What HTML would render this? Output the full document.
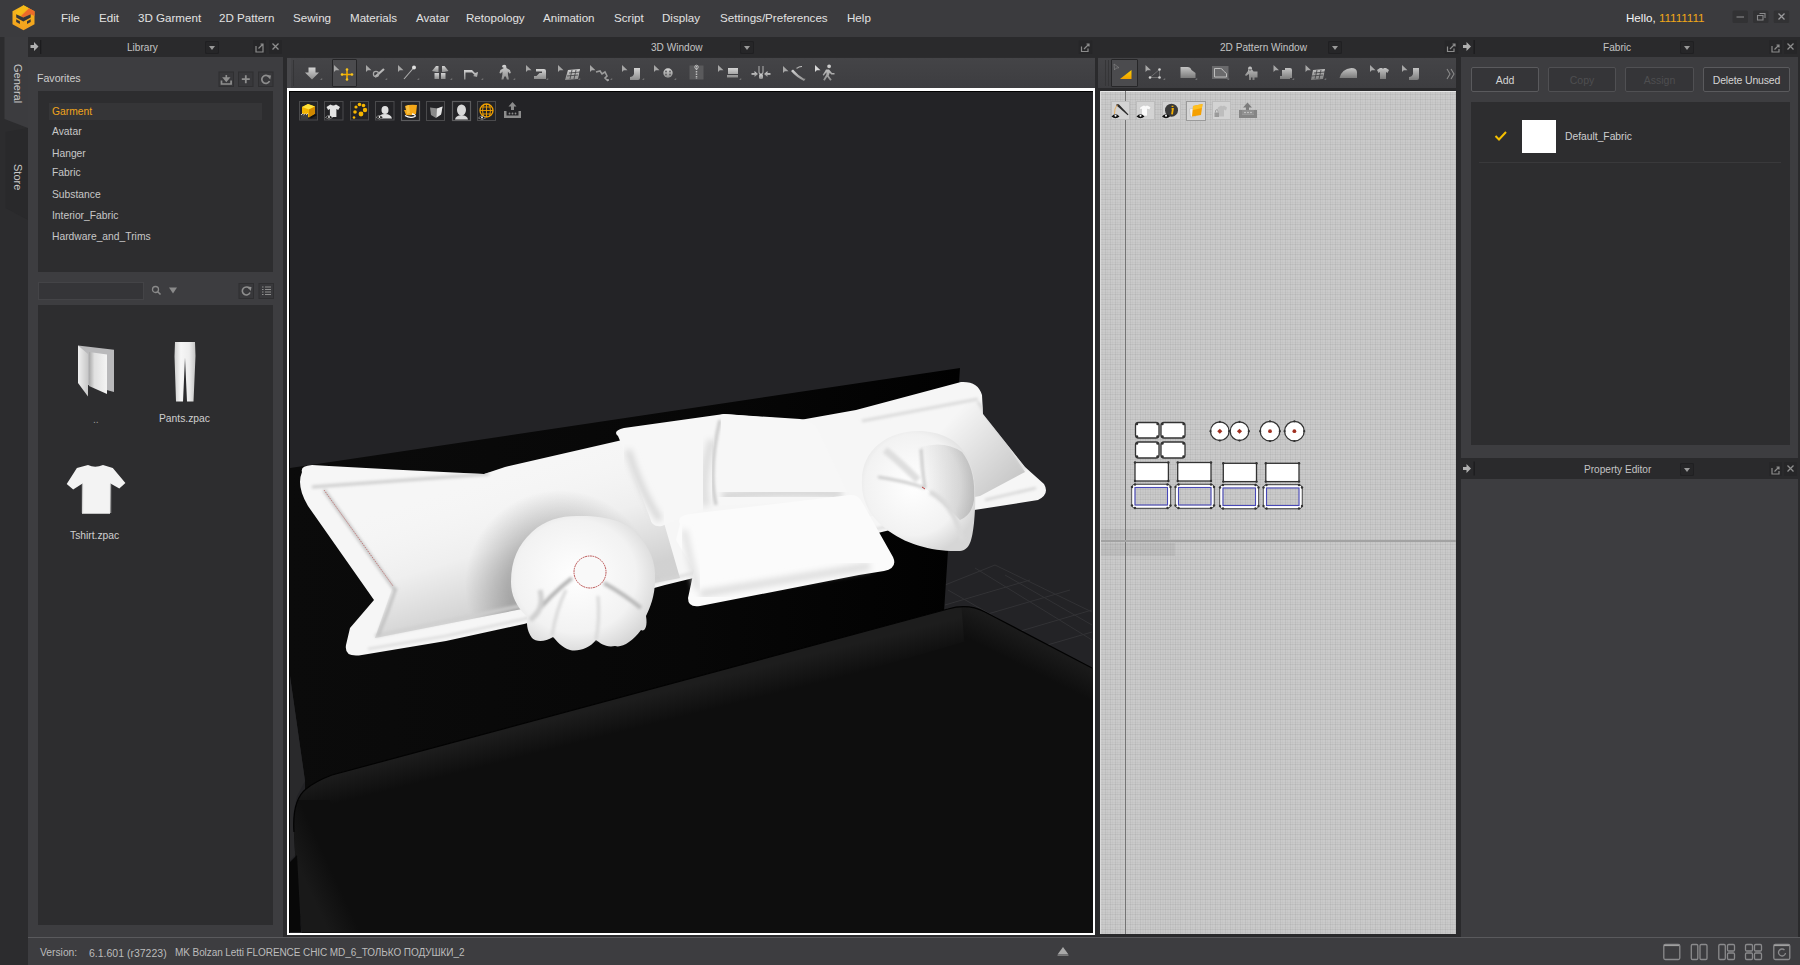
<!DOCTYPE html>
<html><head><meta charset="utf-8">
<style>
*{margin:0;padding:0;box-sizing:border-box}
html,body{width:1800px;height:965px;overflow:hidden;background:#2c2c2e;font-family:"Liberation Sans",sans-serif;color:#c8c8c8}
.a{position:absolute}
#menubar{left:0;top:0;width:1800px;height:37px;background:#3b3b3e}
.mi{position:absolute;top:11px;font-size:11.6px;color:#e2e2e2;white-space:nowrap;line-height:14px}
.hdr{position:absolute;top:37px;height:20px;background:#2a2a2c}
.htitle{position:absolute;top:5px;font-size:10.1px;color:#c4c4c4;white-space:nowrap;line-height:12px}
.dd{position:absolute;top:4px;width:14px;height:13px;background:#262628;border-radius:2px;box-shadow:inset 0 0 0 1px #202022}
.dd:after{content:"";position:absolute;left:4px;top:5px;border-left:3px solid transparent;border-right:3px solid transparent;border-top:4px solid #9a9a9a}
.panel{position:absolute;background:#3d3d40}
.list{position:absolute;background:#2d2d2f}
.li{position:absolute;left:14px;font-size:10.3px;color:#c8c8c8;white-space:nowrap;line-height:12px}
</style></head><body>

<!-- MENU BAR -->
<div id="menubar" class="a">
  <svg class="a" style="left:0;top:0" width="48" height="36" viewBox="0 0 48 36">
    <defs><linearGradient id="lg1" x1="0" y1="0" x2="0" y2="1"><stop offset="0" stop-color="#f5b81c"/><stop offset="1" stop-color="#f2a01e"/></linearGradient></defs>
    <polygon points="23.5,5.2 34.5,11.3 34.5,24.2 23.5,30.3 12.5,24.2 12.5,11.3" fill="url(#lg1)"/>
    <polygon points="23.5,5.2 29,8.2 22,13 18,16.5 16,15.5 16,12" fill="#f6bb18"/>
    <polygon points="29,8.2 34.5,11.3 34.5,16 30.7,14.2 23.3,17.5 21,16" fill="#ec6a2a"/>
    <polygon points="16.2,14.2 23.3,17.5 30.7,14.2 30.7,17.5 23.3,21.6 16.2,17.5" fill="#35363a"/>
    <polygon points="16.2,19.3 19.9,21.2 19.9,23.9 16.2,22" fill="#35363a"/>
    <polygon points="30.7,19.3 27,21.2 27,23.9 30.7,22" fill="#35363a"/>
  </svg>
  <span class="mi" style="left:61px">File</span>
  <span class="mi" style="left:99px">Edit</span>
  <span class="mi" style="left:138px">3D Garment</span>
  <span class="mi" style="left:219px">2D Pattern</span>
  <span class="mi" style="left:293px">Sewing</span>
  <span class="mi" style="left:350px">Materials</span>
  <span class="mi" style="left:416px">Avatar</span>
  <span class="mi" style="left:466px">Retopology</span>
  <span class="mi" style="left:543px">Animation</span>
  <span class="mi" style="left:614px">Script</span>
  <span class="mi" style="left:662px">Display</span>
  <span class="mi" style="left:720px">Settings/Preferences</span>
  <span class="mi" style="left:847px">Help</span>
  <svg class="a" style="left:1730px;top:9px" width="62" height="16" viewBox="1730 9 62 16">
 <g fill="#323234"><rect x="1732.5" y="10.5" width="15.5" height="12.5" rx="1.5"/><rect x="1753" y="10.5" width="15.5" height="12.5" rx="1.5"/><rect x="1773.7" y="10.5" width="15.5" height="12.5" rx="1.5"/></g>
 <path d="M1736.5,17 h7.5" stroke="#7c7c7e" stroke-width="1.3"/>
 <path d="M1757.5,15.5 h5.5 v4.5 h-5.5z M1759.5,13.5 h5.5 v4.5" stroke="#8a8a8c" stroke-width="1.1" fill="none"/>
 <path d="M1778.5,13.5 l6,6 M1784.5,13.5 l-6,6" stroke="#9a9a9c" stroke-width="1.3"/>
</svg>
  <span class="mi" style="left:1626px;color:#f4f4f4">Hello, <span style="color:#f0a818">11111111</span></span>
</div>

<!-- LEFT TAB STRIP -->
<div class="a" style="left:0;top:37px;width:28px;height:928px;background:#2c2c2e"></div>

<!-- HEADERS -->
<div class="hdr" style="left:28px;width:255px"><span class="htitle" style="left:99px">Library</span><div class="dd" style="left:177px"></div></div>
<div class="hdr" style="left:283px;width:815px"><span class="htitle" style="left:368px">3D Window</span><div class="dd" style="left:457px"></div><svg class="a" style="left:795px;top:3px" width="16" height="15"><rect x="0.5" y="0.5" width="14" height="13.5" fill="#262628" rx="1"/><path d="M3.5,6.5 v5 h6.5 v-3 M6,9 l5,-5 M8.5,4 h2.5 v2.5" stroke="#8c8c8c" stroke-width="1.2" fill="none"/></svg></div>
<div class="hdr" style="left:1098px;width:363px"><span class="htitle" style="left:122px">2D Pattern Window</span><div class="dd" style="left:230px"></div><svg class="a" style="left:346px;top:3px" width="16" height="15"><rect x="0.5" y="0.5" width="14" height="13.5" fill="#262628" rx="1"/><path d="M3.5,6.5 v5 h6.5 v-3 M6,9 l5,-5 M8.5,4 h2.5 v2.5" stroke="#8c8c8c" stroke-width="1.2" fill="none"/></svg></div>
<div class="hdr" style="left:1461px;width:339px"><span class="htitle" style="left:142px">Fabric</span><div class="dd" style="left:219px"></div><svg class="a" style="left:0;top:0" width="339" height="20" viewBox="0 0 339 20">
  <path d="M2,8 h3.5 v-3 l4.5,4.5 l-4.5,4.5 v-3 h-3.5z" fill="#b0b0b0"/>
  <rect x="12.5" y="3" width="1.3" height="14" fill="#1c1c1e"/>
  <rect x="308" y="3" width="13" height="14" fill="#262628" rx="1"/>
  <path d="M311,9 v6 h7 v-3 M313.5,12.5 l4.5,-4.5 M315.5,8 h2.5 v2.5" stroke="#8c8c8c" stroke-width="1.2" fill="none"/>
  <rect x="323" y="3" width="13" height="14" fill="#262628" rx="1"/>
  <path d="M326.5,6.5 l6,6 M332.5,6.5 l-6,6" stroke="#8e8e8e" stroke-width="1.3"/>
</svg></div>

<!-- LEFT PANEL -->
<div class="panel" style="left:28px;top:57px;width:255px;height:880px"></div>
<!-- tabs -->
<svg class="a" style="left:0;top:37px" width="28" height="200" viewBox="0 0 28 200">
  <polygon points="4.5,0 28,0 28,91 4.5,82" fill="#3c3c3f"/>
  <polygon points="5.5,95 28,91 28,183 5.5,171" fill="#29292b"/>
</svg>
<div class="a" style="left:8px;top:64px;width:20px;height:40px;font-size:11px;color:#c9c9c9;writing-mode:vertical-rl;line-height:20px;white-space:nowrap">General</div>
<div class="a" style="left:8px;top:164px;width:20px;height:40px;font-size:11px;color:#c9c9c9;writing-mode:vertical-rl;line-height:20px;white-space:nowrap">Store</div>
<!-- header icons -->
<svg class="a" style="left:28px;top:37px" width="255" height="20" viewBox="0 0 255 20">
  <path d="M2.5,8 h3.5 v-3 l4.5,4.5 l-4.5,4.5 v-3 h-3.5z" fill="#b0b0b0"/>
  <rect x="12" y="3" width="1.3" height="14" fill="#1c1c1e"/>
  <rect x="225" y="3" width="13" height="14" fill="#262628" rx="1"/>
  <path d="M228,9 v6 h7 v-6 M230.5,11.5 l4.5,-4.5 M232.5,7 h2.5 v2.5" stroke="#8c8c8c" stroke-width="1.2" fill="none"/>
  <rect x="241" y="3" width="13" height="14" fill="#262628" rx="1"/>
  <path d="M244.5,6.5 l6,6 M250.5,6.5 l-6,6" stroke="#8e8e8e" stroke-width="1.3"/>
</svg>
<span class="a" style="left:37px;top:72px;font-size:10.6px;color:#cdcdcd;line-height:12px">Favorites</span>
<svg class="a" style="left:218px;top:71px" width="57" height="18" viewBox="0 0 57 18">
  <rect x="1" y="1" width="14.5" height="14.5" fill="#38383b" stroke="#2f2f31"/>
  <path d="M8.3,4 v5 M5.8,7 l2.5,3 l2.5,-3z" stroke="#8e8e8e" stroke-width="1.6" fill="#8e8e8e"/>
  <path d="M3.5,9.5 v3.5 h9.6 v-3.5" stroke="#8e8e8e" stroke-width="1.7" fill="none"/>
  <rect x="20.5" y="1" width="14.5" height="14.5" fill="#38383b" stroke="#2f2f31"/>
  <path d="M27.8,4.2 v8 M23.8,8.2 h8" stroke="#8e8e8e" stroke-width="1.8"/>
  <rect x="40.5" y="1" width="14.5" height="14.5" fill="#38383b" stroke="#2f2f31"/>
  <path d="M51,6 A4,4 0 1 0 51.5,10" stroke="#8e8e8e" stroke-width="1.7" fill="none"/>
  <path d="M48.5,4 l4.5,0.5 l-0.8,4z" fill="#8e8e8e"/>
</svg>
<div class="list" style="left:38px;top:91px;width:235px;height:181px"></div>
<div class="a" style="left:49px;top:103px;width:213px;height:17px;background:#353537"></div>
<span class="li" style="left:52px;top:106px;color:#f0a41c">Garment</span>
<span class="li" style="left:52px;top:126px">Avatar</span>
<span class="li" style="left:52px;top:148px">Hanger</span>
<span class="li" style="left:52px;top:167px">Fabric</span>
<span class="li" style="left:52px;top:189px">Substance</span>
<span class="li" style="left:52px;top:210px">Interior_Fabric</span>
<span class="li" style="left:52px;top:231px">Hardware_and_Trims</span>
<!-- search row -->
<div class="a" style="left:38px;top:282px;width:106px;height:18px;background:#353538;border:1px solid #444447"></div>
<svg class="a" style="left:150px;top:283px" width="125" height="16" viewBox="0 0 125 16">
  <circle cx="5.5" cy="6.5" r="3" stroke="#8a8a8a" stroke-width="1.3" fill="none"/>
  <path d="M7.7,8.7 l2.8,2.8" stroke="#8a8a8a" stroke-width="1.6"/>
  <path d="M19,4.5 h8 l-4,6z" fill="#8a8a8a"/>
  <rect x="89" y="0.5" width="14.5" height="15" fill="#38383b" stroke="#2f2f31"/>
  <path d="M99.5,5.5 A4,4 0 1 0 100,9.5" stroke="#8e8e8e" stroke-width="1.6" fill="none"/>
  <path d="M97,3.5 l4.5,0.5 l-0.8,4z" fill="#8e8e8e"/>
  <rect x="109" y="0.5" width="14.5" height="15" fill="#38383b" stroke="#2f2f31"/>
  <path d="M112,4 h1.5 M112,6.5 h1.5 M112,9 h1.5 M112,11.5 h1.5 M115,4 h6 M115,6.5 h6 M115,9 h6 M115,11.5 h6" stroke="#8e8e8e" stroke-width="1.2"/>
</svg>
<div class="list" style="left:38px;top:305px;width:235px;height:620px"></div>
<svg class="a" style="left:60px;top:330px" width="160" height="200" viewBox="60 330 160 200">
 <defs>
  <linearGradient id="fd1" x1="0" y1="0" x2="1" y2="0"><stop offset="0" stop-color="#f0f0f0"/><stop offset="1" stop-color="#c8c8c8"/></linearGradient>
  <linearGradient id="fd2" x1="0" y1="0" x2="1" y2="0"><stop offset="0" stop-color="#a8a8a8"/><stop offset="0.3" stop-color="#e0e0e0"/><stop offset="1" stop-color="#f4f4f4"/></linearGradient>
  <linearGradient id="pt" x1="0" y1="0" x2="1" y2="0"><stop offset="0" stop-color="#cfcfcf"/><stop offset="0.3" stop-color="#f6f6f6"/><stop offset="0.7" stop-color="#ededed"/><stop offset="1" stop-color="#c4c4c4"/></linearGradient>
 </defs>
 <polygon points="78,345.5 114,349.7 114,392 88,385" fill="#b9b9bb"/>
 <polygon points="89,352 107,354.5 107,394 89,386" fill="url(#fd2)"/>
 <polygon points="78,345.5 88,354 88,396.5 78,383" fill="url(#fd1)"/>
 <path d="M175,342 h20 l0.5,14 l-2,45.5 h-6.5 l-2,-44 l-2,44 h-7 l-1.5,-45z" fill="url(#pt)"/>
 
 <path d="M88,465 Q95,468.5 103,465 L112.8,468 L125.4,483 L119.3,488.6 L110.5,483.5 L110,513.7 L82,513.7 L82.5,483.5 L73.2,489.5 L66.7,483.9 L76.9,468 Z" fill="#f3f3f3"/>
 <path d="M82.5,484 v29 M110.5,484 v29" stroke="#d0d0d0" stroke-width="1.5" opacity="0.6"/>
</svg>
<span class="a" style="left:93px;top:414px;font-size:10.3px;color:#9a9a9a;line-height:12px">..</span>
<span class="a" style="left:159px;top:413px;font-size:10.3px;color:#cfcfcf;line-height:12px">Pants.zpac</span>
<span class="a" style="left:70px;top:530px;font-size:10.3px;color:#cfcfcf;line-height:12px">Tshirt.zpac</span>


<!-- 3D WINDOW -->
<div class="a" style="left:283px;top:57px;width:4px;height:880px;background:#2a2a2c"></div>
<div class="a" style="left:287px;top:58px;width:808px;height:30px;background:linear-gradient(#444447,#3d3d40)"></div>
<div class="a" style="left:287px;top:58px;width:4px;height:30px;background:#48484b"></div>
<div class="a" style="left:293px;top:60px;width:1px;height:26px;background:#353537"></div>
<div class="a" style="left:332px;top:59px;width:25px;height:28px;background:#4b4b4e;border:1px solid #262628;border-radius:1px"></div>
<svg class="a" style="left:287px;top:58px" width="808" height="30" viewBox="287 58 808 30" id="tb3d"><defs><linearGradient id="ig" x1="0" y1="0" x2="0" y2="1"><stop offset="0" stop-color="#d4d4d4"/><stop offset="1" stop-color="#8c8c8c"/></linearGradient></defs><path d="M334,65 v7 l1.8,-1.7 h3.7z" fill="#a6a6a6"/><path d="M366,65 v7 l1.8,-1.7 h3.7z" fill="#a6a6a6"/><path d="M398,65 v7 l1.8,-1.7 h3.7z" fill="#a6a6a6"/><path d="M526,65 v7 l1.8,-1.7 h3.7z" fill="#a6a6a6"/><path d="M558,65 v7 l1.8,-1.7 h3.7z" fill="#a6a6a6"/><path d="M590,65 v7 l1.8,-1.7 h3.7z" fill="#a6a6a6"/><path d="M622,65 v7 l1.8,-1.7 h3.7z" fill="#a6a6a6"/><path d="M654,65 v7 l1.8,-1.7 h3.7z" fill="#a6a6a6"/><path d="M718,65 v7 l1.8,-1.7 h3.7z" fill="#a6a6a6"/><path d="M783,66 v7 l1.8,-1.7 h3.7z" fill="#a6a6a6"/><path d="M815,65 v7 l1.8,-1.7 h3.7z" fill="#d8d8d8"/><path d="M320,80 l2.2,-2.2 v2.2z" fill="#6e6e70"/><path d="M385,80 l2.2,-2.2 v2.2z" fill="#6e6e70"/><path d="M417,80 l2.2,-2.2 v2.2z" fill="#6e6e70"/><path d="M450,80 l2.2,-2.2 v2.2z" fill="#6e6e70"/><path d="M481,80 l2.2,-2.2 v2.2z" fill="#6e6e70"/><path d="M513,80 l2.2,-2.2 v2.2z" fill="#6e6e70"/><path d="M546,80 l2.2,-2.2 v2.2z" fill="#6e6e70"/><path d="M578,80 l2.2,-2.2 v2.2z" fill="#6e6e70"/><path d="M610,80 l2.2,-2.2 v2.2z" fill="#6e6e70"/><path d="M642,80 l2.2,-2.2 v2.2z" fill="#6e6e70"/><path d="M674,80 l2.2,-2.2 v2.2z" fill="#6e6e70"/><path d="M739,80 l2.2,-2.2 v2.2z" fill="#6e6e70"/><path d="M803,80 l2.2,-2.2 v2.2z" fill="#6e6e70"/><g fill="url(#ig)">
 <path d="M308.5,67.5 h7 v5 h3.5 l-7,7 l-7,-7 h3.5z"/>
 <path d="M432,71 l4,-5 h2.5 v6 h-2 l0,0z M448.5,71 l-4,-5 h-2.5 v6 h2z"/>
 <rect x="434.5" y="73" width="4.5" height="6"/><rect x="441" y="73" width="4.5" height="6"/>
 <path d="M464,70 h8 l3,3 l3,-1 l-1,5 l-4,-1 l1.5,-1 l-2.5,-2.5 h-6.5 v7 h-1.5z"/>
 <path d="M502,67 a2.2,2.2 0 1 1 4.4,0 v1 l3.5,2 l1,3 l-1.5,0.5 l-1.5,-2 v3 l1,5 h-2 l-1,-3 h-1.5 l-1,3 h-2 l1,-5 v-3 l-1.5,2 l-1.5,-0.5 l1,-3 l3.5,-2z"/>
 <path d="M536,69 h8 a2,2 0 0 1 2,2 v8 h-12 v-3 h2.5 l3,-3 h2.5 v-1.5 h-6z"/>
 <path d="M568,70 l12,-1 l-2,10 l-13,1z"/>
 
 <path d="M634,68 h6 v10 a2,2 0 0 1 -2,2 h-8 v-3 q3,0 4,-3z"/>
 <circle cx="668" cy="73" r="4.7"/>
 <rect x="689.5" y="65.5" width="14" height="14" fill="#5a5a5c"/>
 <path d="M728,68 h10 v6 h-10z M727,75 h11 v2.5 h-11z"/>
 <path d="M759,66 v6 q0,2 2,2 q2,0 2,-2 v-6" stroke="#a8a8a8" stroke-width="1.1" fill="none"/>
 <rect x="759" y="74" width="4" height="5" rx="1.5"/>
 <path d="M758,74 l-3.5,-3 v2 h-3 v2 h3 v2z M764,74 l3.5,-3 v2 h3 v2 h-3 v2z"/>
 <path d="M791,71 l2,-1.5 q5,6 12,10 l-1,1.5 q-8,-4 -13,-10z"/>
 <path d="M796,68 q3,-2 6,-2 l0,1 q-3,0 -5,2z" />
 <path d="M827.2,66.3 a1.9,1.9 0 1 0 3.8,0 a1.9,1.9 0 1 0 -3.8,0z M826,69.5 l3,0 l3,3.5 l2.5,0 v1.5 h-3.3 l-1.5,-1.8 l-1,3 l3,4 l-1.5,1 l-3,-4 l-2.5,4 l-1.5,-1 l3,-5 l0.5,-2.5 l-1.5,1.5 l-1.5,2 l-1,-1 l2,-3z"/>
</g>
<g fill="#5a5a5c"><circle cx="666" cy="71.5" r="0.9"/><circle cx="670" cy="71.5" r="0.9"/><circle cx="666" cy="74.5" r="0.9"/><circle cx="670" cy="74.5" r="0.9"/></g>
<path d="M696.5,66 v13" stroke="#c0c0c0" stroke-width="1.5" stroke-dasharray="1.5 1"/>
<circle cx="696.5" cy="67" r="1.8" fill="none" stroke="#bbb" stroke-width="0.9"/>
<path d="M569,73 l11,-1 M567,76 l11,-1 M572,70 l-2,9 M576,70 l-2,9" stroke="#3d3d40" stroke-width="0.8"/>
<path d="M347,69.5 v10 M342,74.5 h10" stroke="#f2ae00" stroke-width="1.5"/>
<g fill="#f8c41c"><circle cx="347" cy="69.5" r="1.3"/><circle cx="347" cy="79.5" r="1.3"/><circle cx="342" cy="74.5" r="1.3"/><circle cx="352" cy="74.5" r="1.3"/></g>
<path d="M375,77 l9,-8" stroke="#b8b8b8" stroke-width="2.2"/>
<circle cx="376" cy="74" r="2.6" fill="none" stroke="#a8a8a8" stroke-width="1.2"/>
<path d="M404,79 l9.5,-11" stroke="#b0b0b0" stroke-width="1.1"/><path d="M596,72 l4,-1 l2,3 l3,-2 l2,4 l-2,2 l3,3" stroke="#9c9c9c" stroke-width="1.6" fill="none"/><circle cx="608" cy="80" r="1" fill="#aaa"/>
<circle cx="414" cy="67.5" r="2" fill="#e0e0e0"/>
</svg>
<!-- viewport -->
<div class="a" style="left:287px;top:88px;width:808px;height:847px;background:#ffffff"></div>
<div class="a" style="left:289px;top:91px;width:804px;height:842px;background:#000"></div>
<div class="a" id="vp" style="left:290px;top:92px;width:803px;height:841px;background:#232326;overflow:hidden"></div>
<svg class="a" style="left:290px;top:92px" width="803" height="841" viewBox="290 92 803 841">
<defs>
 <linearGradient id="mat" x1="0" y1="0" x2="0.3" y2="1"><stop offset="0" stop-color="#1b1b1b"/><stop offset="0.25" stop-color="#131313"/><stop offset="1" stop-color="#0b0b0b"/></linearGradient>
 <linearGradient id="hb" x1="0" y1="0" x2="1" y2="0"><stop offset="0" stop-color="#0b0b0b"/><stop offset="0.6" stop-color="#070707"/><stop offset="1" stop-color="#010101"/></linearGradient>
 <linearGradient id="pw" x1="0" y1="0" x2="0.2" y2="1"><stop offset="0" stop-color="#f4f4f4"/><stop offset="0.6" stop-color="#f8f8f8"/><stop offset="1" stop-color="#dedede"/></linearGradient>
 <radialGradient id="rp" cx="0.45" cy="0.45" r="0.6"><stop offset="0" stop-color="#ffffff"/><stop offset="0.7" stop-color="#f2f2f2"/><stop offset="1" stop-color="#d6d6d6"/></radialGradient>
 <filter id="bl1"><feGaussianBlur stdDeviation="3"/></filter>
 <filter id="bl3" x="-20%" y="-20%" width="140%" height="140%"><feGaussianBlur stdDeviation="7"/></filter>
 <filter id="bl2"><feGaussianBlur stdDeviation="1.5"/></filter>
</defs>
<rect x="290" y="92" width="803" height="841" fill="#232326"/>
<!-- floor grid -->
<g stroke="#323235" stroke-width="1" fill="none">
 <path d="M945,585 L995,565 L1092,612"/>
 <path d="M945,605 L1030,580 M950,625 L1070,590 M990,640 L1092,610 M1030,650 L1092,632"/>
 <path d="M975,568 L1092,640 M948,590 L1070,660 M1005,575 L1092,625"/>
</g>
<!-- headboard -->
<polygon points="290,468 960,368 944,612 305,800 305,781 290,676" fill="url(#hb)"/>
<polygon points="290,676 305,781 297,796 293,815 295,855 290,860" fill="#29292b"/>
<!-- mattress -->
<clipPath id="mclip"><path d="M294,832 Q292,800 306,789 Q316,781 332,775 L948,609 Q968,603 985,612 L1093,668.5 L1093,933 L302,933 Q296,880 294,832Z"/></clipPath>
<path d="M294,832 Q292,800 306,789 Q316,781 332,775 L948,609 Q968,603 985,612 L1093,668.5 L1093,933 L302,933 Q296,880 294,832Z" fill="#0e0e0e"/>
<g clip-path="url(#mclip)">
 <linearGradient id="rimT" gradientUnits="userSpaceOnUse" x1="630" y1="700" x2="637" y2="728"><stop offset="0" stop-color="#1d1d1d"/><stop offset="1" stop-color="#0e0e0e"/></linearGradient>
 <linearGradient id="rimR" gradientUnits="userSpaceOnUse" x1="1000" y1="620" x2="986" y2="648"><stop offset="0" stop-color="#1c1c1c"/><stop offset="1" stop-color="#0e0e0e"/></linearGradient>
 <linearGradient id="rimL" gradientUnits="userSpaceOnUse" x1="300" y1="870" x2="326" y2="858"><stop offset="0" stop-color="#191919"/><stop offset="1" stop-color="#0e0e0e"/></linearGradient>
 <polygon points="280,780 960,585 970,640 290,840" fill="url(#rimT)"/>
 <polygon points="960,590 1100,660 1100,720 965,650" fill="url(#rimR)"/>
 <polygon points="290,800 330,800 362,932 290,932" fill="url(#rimL)"/>
</g>
<path d="M294,832 Q292,800 306,789 Q316,781 332,775 L948,609 Q968,603 985,612 L1092,668" fill="none" stroke="#030303" stroke-width="1.2"/>
<polygon points="290,862 297,855 301,932 290,932" fill="#080808"/>

<!-- back long pillow with flange -->
<clipPath id="bpclip"><path d="M302,472 Q300,466 312,465 L329,466 L403,470 L484,474 L505,467 L618,441 L724,414 L800,420 L856,410 L961,382 Q978,381 982,395 L983,414 L1025,467 L1044,484 Q1050,494 1038,500 L968,511 L665,585 L524,624 L446,641 L362,655 Q344,658 346,645 L350,628 L374,600 L308,506 Q296,486 302,472Z"/></clipPath>
<path d="M302,472 Q300,466 312,465 L329,466 L403,470 L484,474 L505,467 L618,441 L724,414 L800,420 L856,410 L961,382 Q978,381 982,395 L983,414 L1025,467 L1044,484 Q1050,494 1038,500 L968,511 L665,585 L524,624 L446,641 L362,655 Q344,658 346,645 L350,628 L374,600 L308,506 Q296,486 302,472Z" fill="#f6f6f6"/>
<g clip-path="url(#bpclip)">
 <linearGradient id="lpb" gradientUnits="userSpaceOnUse" x1="430" y1="490" x2="470" y2="620"><stop offset="0" stop-color="#ffffff" stop-opacity="0"/><stop offset="0.55" stop-color="#000" stop-opacity="0.03"/><stop offset="1" stop-color="#000" stop-opacity="0.15"/></linearGradient>
 <polygon points="324,490 489,474 640,440 680,578 375,638 393,586" fill="url(#lpb)"/>
 <radialGradient id="shd" gradientUnits="userSpaceOnUse" cx="560" cy="585" r="95"><stop offset="0.55" stop-color="#000" stop-opacity="0.22"/><stop offset="1" stop-color="#000" stop-opacity="0"/></radialGradient>
 <polygon points="324,490 489,474 640,440 680,578 375,638 393,586" fill="url(#shd)"/>
 <linearGradient id="rpb" gradientUnits="userSpaceOnUse" x1="945" y1="425" x2="1015" y2="490"><stop offset="0" stop-color="#000" stop-opacity="0"/><stop offset="1" stop-color="#000" stop-opacity="0.2"/></linearGradient>
 <polygon points="862,421 978,400 1025,472 980,496 850,520" fill="url(#rpb)"/>
 <g filter="url(#bl2)" fill="none">
  <path d="M312,487 L489,474" stroke="#cdcdcd" stroke-width="3"/>
  <path d="M324,490 L395,590" stroke="#c8c8c8" stroke-width="3.5"/>
  <path d="M375,636 L520,606 L660,577" stroke="#cfcfcf" stroke-width="3"/>
  <path d="M368,649 L446,636 L524,619 L665,580 L968,507" stroke="#d6d6d6" stroke-width="2"/>
  <path d="M862,421 L978,399 M978,402 L1025,470" stroke="#d6d6d6" stroke-width="2.5"/>
  <path d="M985,500 L1036,488" stroke="#cfcfcf" stroke-width="2"/>
  <path d="M396,588 Q388,612 378,636" stroke="#c0c0c0" stroke-width="3"/>
 </g>
</g>
<path d="M324,490 L393,586" stroke="#b04040" stroke-width="0.7" stroke-dasharray="1.5 1" fill="none" opacity="0.85"/>
<!-- upper middle pillow -->
<path d="M618,436 Q612,431 624,428 L724,414 L800,419 Q812,420 818,430 L846,490 Q852,500 840,500 L709,506 L662,526 Q652,528 650,518 L624,450Z" fill="#f7f7f7"/>
<path d="M720,420 Q708,470 716,505" stroke="#c4c4c4" stroke-width="3" fill="none" filter="url(#bl2)"/>
<path d="M712,440 Q700,480 706,506" stroke="#dcdcdc" stroke-width="8" fill="none" filter="url(#bl1)"/>
<path d="M722,496 Q790,490 842,494" stroke="#d6d6d6" stroke-width="9" fill="none" filter="url(#bl1)"/>
<path d="M628,450 Q640,490 660,520" stroke="#d4d4d4" stroke-width="6" fill="none" filter="url(#bl1)"/>
<!-- lower middle pillow -->
<path d="M680,524 Q676,516 690,514 L850,495 Q858,494 862,502 L893,557 Q898,568 884,571 L859,575 L700,606 Q688,608 688,598 L694,570 L676,540Z" fill="#fbfbfb"/>
<path d="M700,594 L870,566" stroke="#dcdcdc" stroke-width="7" fill="none" filter="url(#bl1)"/>
<path d="M684,530 Q690,560 698,590" stroke="#e0e0e0" stroke-width="6" fill="none" filter="url(#bl1)"/>
<!-- round pillow left -->
<path d="M577,516 C605,515 628,522 637,534 C650,548 656,562 655,580 C655,596 650,608 646,616 C648,628 644,632 641,630 C632,642 622,648 615,646 C606,648 600,643 596,640 C590,648 578,652 570,650 C562,648 556,640 553,637 C545,642 536,642 532,638 C526,630 527,622 527,617 C516,606 511,595 511,582 C511,560 518,545 532,532 C545,520 560,516 577,516Z" fill="url(#rp)"/>
<g filter="url(#bl2)" fill="none">
 <path d="M572,578 Q550,595 533,617" stroke="#b4b4b4" stroke-width="4"/>
 <path d="M604,583 Q625,595 641,608" stroke="#b8b8b8" stroke-width="4"/>
 <path d="M566,590 Q556,610 552,636 M598,596 Q600,620 596,640" stroke="#d8d8d8" stroke-width="3"/>
 <path d="M540,590 Q545,610 530,620" stroke="#d0d0d0" stroke-width="5"/>
</g>
<circle cx="590" cy="572" r="16" fill="#f9f9f9"/>
<circle cx="590" cy="572" r="16" fill="none" stroke="#b03a3a" stroke-width="0.9" stroke-dasharray="1.8 0.7"/>
<!-- round pillow right -->
<path d="M918,431 C940,431 958,440 966,455 C975,470 977,490 974,523 C972,540 970,550 960,551 C935,552 905,545 885,528 C868,515 861,498 862,480 C862,450 888,431 918,431Z" fill="url(#rp)"/>
<linearGradient id="lobe" gradientUnits="userSpaceOnUse" x1="925" y1="470" x2="975" y2="470"><stop offset="0" stop-color="#000" stop-opacity="0.02"/><stop offset="1" stop-color="#000" stop-opacity="0.16"/></linearGradient>
<path d="M921,447 Q945,440 962,452 Q976,470 974,500 Q972,515 960,520 Q945,505 925,488 Z" fill="url(#lobe)"/>
<g filter="url(#bl2)" fill="none">
 <path d="M921,449 Q922,470 925,488" stroke="#a8a8a8" stroke-width="1.6"/>
 <path d="M878,477 Q905,481 925,488" stroke="#b8b8b8" stroke-width="1.8"/>
 <path d="M930,492 Q955,505 962,540" stroke="#dadada" stroke-width="5"/>
 <path d="M885,450 Q900,462 918,480" stroke="#dedede" stroke-width="7"/>
</g>
<path d="M922,487 l3,2" stroke="#c04040" stroke-width="1"/>
</svg>
<svg class="a" style="left:295px;top:98px" width="230" height="26" viewBox="295 98 230 26">
 <g fill="none" stroke="#4a4a4c" stroke-width="1"><rect x="299.5" y="101.5" width="18" height="18.5"/><rect x="324.5" y="101.5" width="18.5" height="18.5"/><rect x="350.5" y="101.5" width="18" height="18.5"/><rect x="375.5" y="101.5" width="18.5" height="18.5"/><rect x="426.5" y="101.5" width="18" height="19"/><rect x="477.5" y="101.5" width="18" height="19"/></g>
 <g fill="none" stroke="#5c5c5e" stroke-width="1.2"><rect x="401.5" y="101.5" width="18" height="19"/><rect x="452.5" y="101.5" width="18" height="19"/></g>
 <polygon points="302,107 308,104 315,106.5 315,114 309,117.5 302,114.5" fill="#f2b400"/>
 <polygon points="302,107 308,104 315,106.5 309,109.5" fill="#ffe23a"/>
 <polygon points="309,109.5 315,106.5 315,114 309,117.5" fill="#d08800"/>
 <path d="M309,117.5 l6,-3.5 l2,1 l-6,3.5z" fill="#111"/>
 <rect x="300.5" y="114" width="7.5" height="5.5" fill="#3c3c3c"/><path d="M301,115 l1.8,-1.6 M303.5,115 l1.8,-1.6 M306,115 l1.8,-1.6" stroke="#e0e0e0" stroke-width="0.9"/>
 <path d="M326.5,107 l4,-2.5 q2.8,2 5.5,0 l4,2.5 l-1.8,3 l-1.8,-1 v8 h-6.5 v-8 l-1.8,1z" fill="#e4e4e4"/>
 <path d="M325.5,117.5 q3.5,-4 7,0 q-3.5,3 -7,0z" fill="#0a0a0a" stroke="#ddd" stroke-width="0.5"/><circle cx="329" cy="117.0" r="0.9" fill="#fff"/>
 <g fill="#f5b500"><circle cx="356" cy="107" r="1.6"/><circle cx="359.5" cy="104.5" r="1.8"/><circle cx="363.5" cy="105.5" r="1.8"/><circle cx="365" cy="110" r="2.2"/><circle cx="361" cy="114" r="2.4"/><circle cx="355" cy="112" r="1.8"/><circle cx="354" cy="117.5" r="1.3"/></g>
 <path d="M381.5,110 a3.5,4 0 1 1 7,0 a3.5,4 0 1 1 -7,0z M378,118.5 q1,-4.5 7,-4.5 q6,0 7,4.5z" fill="#e0e0e0"/>
 <path d="M376.0,117.5 q3.5,-4 7,0 q-3.5,3 -7,0z" fill="#0a0a0a" stroke="#ddd" stroke-width="0.5"/><circle cx="379.5" cy="117.0" r="0.9" fill="#fff"/>
 <path d="M405,106 q5,-2 12,-1 l-1,9 q-5,2 -10,1 l-2,-5 l2,0z" fill="#f5a818"/>
 <path d="M406,106 l3,-1 l1,8 l-3,1z" fill="#f8c040"/>
 <path d="M405,115.5 q5,3 10,1 q1,-2 -3,-2.5" stroke="#fff" stroke-width="1.3" fill="none"/>
 <path d="M430,107.5 l8,1 l4.5,-2 l-1.5,8 l-5,3.5 l-5,-3z" fill="#8a8a8a"/>
 <path d="M437,108.5 l5.5,-2 l-1.5,8 l-4.5,3z" fill="#e4e4e4"/>
 <path d="M457,110 a4.5,5.5 0 1 1 9,0 a4.5,5.5 0 1 1 -9,0z M455,119.5 q0.5,-4 6.5,-4.5 q6,0.5 6.5,4.5z" fill="#d8d8d8"/>
 <circle cx="486.5" cy="110.5" r="6.5" fill="none" stroke="#f0a000" stroke-width="1.3"/>
 <path d="M480,110.5 h13 M486.5,104 v13 M481.5,107 h10 M481.5,114 h10 M483.5,104.5 q-2,6 0,12 M489.5,104.5 q2,6 0,12" stroke="#f0a000" stroke-width="0.9" fill="none"/>
 <path d="M478.5,118 q3.5,-4 7,0 q-3.5,3 -7,0z" fill="#0a0a0a" stroke="#ddd" stroke-width="0.5"/><circle cx="482" cy="117.5" r="0.9" fill="#fff"/>
 <path d="M512.5,102 l-4,4.5 h2.5 v3.5 h3 v-3.5 h2.5z" fill="#8c8c8c"/>
 <path d="M504,111 v7 h17 v-7 h-2.5 v4.5 h-12 v-4.5z" fill="#8c8c8c"/>
 <g fill="#8c8c8c"><circle cx="509.5" cy="113.5" r="0.9"/><circle cx="512.5" cy="113.5" r="0.9"/><circle cx="515.5" cy="113.5" r="0.9"/></g>
</svg>
<div class="a" style="left:1095px;top:57px;width:3px;height:880px;background:#2a2a2c"></div>

<!-- 2D WINDOW -->
<div class="a" style="left:1098px;top:58px;width:360px;height:30px;background:linear-gradient(#444447,#3d3d40)"></div>
<div class="a" style="left:1098px;top:88px;width:363px;height:3px;background:#2a2a2c"></div>
<div class="a" id="grid" style="left:1100px;top:91px;width:356px;height:843px;background-color:#cacaca;background-image:repeating-linear-gradient(90deg,rgba(0,0,0,0.05) 0 1px,transparent 1px 2.5px,rgba(0,0,0,0.02) 2.5px 3.5px,transparent 3.5px 5px),repeating-linear-gradient(0deg,rgba(0,0,0,0.05) 0 1px,transparent 1px 2.5px,rgba(0,0,0,0.02) 2.5px 3.5px,transparent 3.5px 5px);background-position:0 1px"></div>
<div class="a" style="left:1100px;top:91px;width:356px;height:1px;background:#e6e6e6"></div>
<div class="a" style="left:1100px;top:529px;width:70px;height:10px;background:rgba(0,0,0,0.05)"></div>
<div class="a" style="left:1100px;top:543px;width:75px;height:13px;background:rgba(0,0,0,0.05)"></div>
<div class="a" style="left:1125px;top:91px;width:1px;height:843px;background:#747474"></div>
<div class="a" style="left:1100px;top:540px;width:356px;height:1.5px;background:#a2a2a2"></div>
<div class="a" style="left:1100px;top:91px;width:1px;height:843px;background:#dcdcdc"></div>
<!-- 2D toolbar icons -->
<div class="a" style="left:1111px;top:59px;width:27px;height:28px;background:#4b4b4e;border:1px solid #262628;border-radius:1px"></div>
<div class="a" style="left:1105px;top:60px;width:1px;height:26px;background:#353537"></div>
<div class="a" style="left:1108px;top:60px;width:1px;height:26px;background:#353537"></div>
<svg class="a" style="left:1098px;top:58px" width="360" height="30" viewBox="1098 58 360 30">
 <defs><linearGradient id="ig2" x1="0" y1="0" x2="0" y2="1"><stop offset="0" stop-color="#c4c4c4"/><stop offset="1" stop-color="#7c7c7c"/></linearGradient>
 <linearGradient id="yl" x1="0" y1="0" x2="0" y2="1"><stop offset="0" stop-color="#ffd000"/><stop offset="1" stop-color="#f0a000"/></linearGradient></defs>
 <path d="M1114,64 l0.5,6 l1.5,-1.8 l3,-0.5z" fill="none" stroke="#8a8a8a" stroke-width="0.6"/>
 <path d="M1120,79 L1131.5,70 L1131.5,79z" fill="url(#yl)"/>
 <path d="M1145.5,65 v7 l1.8,-1.7 h3.7z" fill="#a8a8a8"/>
 <path d="M1150,77.5 L1159.5,69.5 L1159.5,77.5z" fill="none" stroke="#777" stroke-width="0.8"/>
 <g fill="#d0d0d0"><circle cx="1150" cy="77.5" r="1.3"/><circle cx="1159.5" cy="69.5" r="1.3"/><circle cx="1159.5" cy="77.5" r="1.3"/></g>
 <path d="M1180.5,67 h7 q3,0 4,3 l4,3 v5 h-15z" fill="url(#ig2)"/>
 <rect x="1212" y="66" width="16.5" height="13" fill="#6a6a6c"/>
 <path d="M1214.5,68.5 h6 q2,0 3,2.5 l3,2.5 v3.5 h-12z" fill="none" stroke="#bdbdbd" stroke-width="1"/>
 <path d="M1250,66.5 a2,2 0 1 0 0.1,0z M1248,69.5 h4 l1.5,2 h4 v6 h-3 v2.5 h-2 v-2.5 h-1.5 v2.5 h-2 v-6 l-3,2 l-1,-1 l3,-4z" fill="url(#ig2)"/>
 <path d="M1273.5,65 v7 l1.8,-1.7 h3.7z M1305.5,65 v7 l1.8,-1.7 h3.7z M1370,65 v7 l1.8,-1.7 h3.7z M1402,65 v7 l1.8,-1.7 h3.7z" fill="#a8a8a8"/>
 <path d="M1282,70 h3 v-2 h5 a2,2 0 0 1 2,2 v8 h-2 v1 h-10 v-3 h2z" fill="url(#ig2)"/>
 <path d="M1313,70 l12,-1 l-2,10 l-12,1z" fill="url(#ig2)"/>
 <path d="M1314,73 l11,-1 M1312,76 l11,-1 M1317,70 l-2,9 M1321,70 l-2,9" stroke="#3d3d40" stroke-width="0.8"/>
 <path d="M1339.5,78 q2,-9 12,-10 q5,0 5.5,4 v6z" fill="url(#ig2)"/>
 <path d="M1377,70 l3,-2 h2 q1,1.5 2,0 h2 l3,2 l-1.5,3 l-1.5,-1 v7 h-6 v-7 l-1.5,1z" fill="url(#ig2)"/>
 <path d="M1413,68 h6 v10 a2,2 0 0 1 -2,2 h-8 v-3 q3,0 4,-3z" fill="url(#ig2)"/>
 <path d="M1447,69 l3,5 l-3,5 M1451,69 l3,5 l-3,5" stroke="#8a8a8a" stroke-width="1.1" fill="none"/>
 <g fill="#6e6e70"><path d="M1163,80 l2.2,-2.2 v2.2z M1195,80 l2.2,-2.2 v2.2z M1227,80 l2.2,-2.2 v2.2z M1292,80 l2.2,-2.2 v2.2z M1324,80 l2.2,-2.2 v2.2z"/></g>
</svg>
<!-- 2D viewport icons -->
<svg class="a" style="left:1100px;top:91px" width="356" height="40" viewBox="1100 91 356 40">
 <g fill="#d3d3d3" stroke="#bdbdbd" stroke-width="1"><rect x="1111.5" y="101.5" width="18" height="18"/><rect x="1136.5" y="101.5" width="18" height="18"/><rect x="1162.5" y="101.5" width="18" height="18"/><rect x="1212.5" y="101.5" width="18" height="18"/></g>
 <rect x="1186.5" y="101.5" width="19" height="19" fill="#d6d6d6" stroke="#9a9a9a" stroke-width="1"/>
 <path d="M1114.5,114 q0,-6 2,-8" stroke="#e8b060" stroke-width="1" fill="none"/>
 <path d="M1116,105 q1.5,-1.8 3,-0.5 l9.5,10 l-0.8,0.8 z" fill="#2a2a2a"/>
 <path d="M1116.5,105.5 l1.5,-0.5" stroke="#c08040" stroke-width="1"/>
 <path d="M1140,107 l4,-2 q1.5,1.5 3,0 l4,2 l-1.5,3 l-2,-1 v7 h-6 v-7 l-2,1z" fill="#fafafa" stroke="#c0c0c0" stroke-width="0.5"/>
 <circle cx="1171.5" cy="110.2" r="6.5" fill="#3a3a3a"/>
 <path d="M1172.5,105.8 v1.3 M1171.6,108.8 h1.3 l-0.9,5.5" stroke="#f5b000" stroke-width="1.8" fill="none"/>
 <g fill="#111"><path d="M1111.5,116.5 q4,-4.5 8,0 q-4,3.5 -8,0z M1136.5,116.5 q4,-4.5 8,0 q-4,3.5 -8,0z M1162,116.5 q4,-4.5 8,0 q-4,3.5 -8,0z"/></g>
 <g fill="#fff"><circle cx="1115.5" cy="115.8" r="1"/><circle cx="1140.5" cy="115.8" r="1"/><circle cx="1166" cy="115.8" r="1"/></g>
 <path d="M1189.5,109 l5,-1 l1,8.5 l-5,0.5z" fill="#f2f2f2" stroke="#b0b0b0" stroke-width="0.5"/>
 <path d="M1193,106 l9.5,-2 l-1.5,11 l-9,1.5z" fill="#f5a000"/>
 <path d="M1193,106 l9.5,-2 l-0.5,4 l-9,2z" fill="#ffc020"/>
 <path d="M1218,107.5 l3,-2 q1.5,1.5 3,0 l3,2 l-1,3 l-2,-1 v7 h-5 v-7 l-2,1z" fill="#bdbdbd"/>
 <rect x="1214.5" y="112.5" width="4.5" height="4.5" fill="#9a9a9a"/><path d="M1215.5,112.5 v-1.5 a1.3,1.3 0 0 1 2.6,0 v1.5" stroke="#9a9a9a" stroke-width="0.9" fill="none"/>
 <path d="M1247.5,102.5 l-4.5,5 h3 v3 h3 v-3 h3z" fill="#7c7c7c"/>
 <path d="M1239,110 v8 h18 v-8 h-3 v4.5 h-12 v-4.5z" fill="#858585"/>
 <rect x="1242" y="110" width="12" height="4.5" fill="#8f8f8f"/>
 <g fill="#d0d0d0"><circle cx="1245" cy="112.5" r="0.8"/><circle cx="1248" cy="112.5" r="0.8"/><circle cx="1251" cy="112.5" r="0.8"/></g>
</svg>
<!-- pattern pieces -->
<svg class="a" style="left:1100px;top:400px" width="220" height="120" viewBox="1100 400 220 120">
 <g fill="#fff" stroke="#333" stroke-width="1.3">
  <rect x="1135.5" y="422.5" width="23.5" height="15.5" rx="3"/><rect x="1161" y="422.5" width="24" height="15.5" rx="3"/>
  <rect x="1135.5" y="442" width="23.5" height="16" rx="3"/><rect x="1161" y="442" width="24" height="16" rx="3"/>
  <circle cx="1219.8" cy="431.2" r="9.3"/><circle cx="1239.5" cy="431.2" r="9.3"/><circle cx="1270" cy="431.2" r="9.8"/><circle cx="1294.4" cy="431.2" r="9.8"/>
  <rect x="1135" y="462.5" width="33.4" height="18.5"/><rect x="1177.7" y="462.5" width="33.3" height="18.5"/>
  <rect x="1223.3" y="463.3" width="33.2" height="18.3"/><rect x="1265.8" y="463.3" width="33.2" height="18.3"/>
 </g>
 <g fill="none" stroke="#333" stroke-width="1.3">
  <rect x="1132" y="484.5" width="38.5" height="23.5" rx="3.5"/><rect x="1175.5" y="484.5" width="38.5" height="23.5" rx="3.5"/>
  <rect x="1220" y="485" width="38.5" height="23.5" rx="3.5"/><rect x="1263.5" y="485" width="38.5" height="23.5" rx="3.5"/>
 </g>
 <g fill="none" stroke="#fff" stroke-width="2.4">
  <rect x="1133.4" y="485.9" width="35.6" height="20.7" rx="2"/><rect x="1176.9" y="485.9" width="35.6" height="20.7" rx="2"/>
  <rect x="1221.4" y="486.4" width="35.6" height="20.7" rx="2"/><rect x="1264.9" y="486.4" width="35.6" height="20.7" rx="2"/>
 </g>
 <g fill="none" stroke="#4848b8" stroke-width="1.1">
  <rect x="1135" y="487.5" width="32.5" height="17.5"/><rect x="1178.5" y="487.5" width="32.5" height="17.5"/>
  <rect x="1223" y="488" width="32.5" height="17.5"/><rect x="1266.5" y="488" width="32.5" height="17.5"/>
 </g>
 <g fill="#a03020"><rect x="1218" y="429.4" width="3.6" height="3.6" transform="rotate(45 1219.8 431.2)"/><rect x="1237.7" y="429.4" width="3.6" height="3.6" transform="rotate(45 1239.5 431.2)"/><circle cx="1270" cy="431.2" r="1.9"/><circle cx="1294.4" cy="431.2" r="1.9"/></g>
 <g fill="#333">
  <circle cx="1137" cy="424" r="1.2"/><circle cx="1157.5" cy="424" r="1.2"/><circle cx="1137" cy="436.5" r="1.2"/><circle cx="1157.5" cy="436.5" r="1.2"/>
  <circle cx="1162.5" cy="424" r="1.2"/><circle cx="1183.5" cy="424" r="1.2"/><circle cx="1162.5" cy="436.5" r="1.2"/><circle cx="1183.5" cy="436.5" r="1.2"/>
  <circle cx="1137" cy="443.5" r="1.2"/><circle cx="1157.5" cy="443.5" r="1.2"/><circle cx="1137" cy="456.5" r="1.2"/><circle cx="1157.5" cy="456.5" r="1.2"/>
  <circle cx="1162.5" cy="443.5" r="1.2"/><circle cx="1183.5" cy="443.5" r="1.2"/><circle cx="1162.5" cy="456.5" r="1.2"/><circle cx="1183.5" cy="456.5" r="1.2"/>
  <circle cx="1219.8" cy="421.9" r="1.1"/><circle cx="1219.8" cy="440.5" r="1.1"/><circle cx="1210.5" cy="431.2" r="1.1"/><circle cx="1229.1" cy="431.2" r="1.1"/>
  <circle cx="1239.5" cy="421.9" r="1.1"/><circle cx="1239.5" cy="440.5" r="1.1"/><circle cx="1248.8" cy="431.2" r="1.1"/>
  <circle cx="1270" cy="421.4" r="1.1"/><circle cx="1270" cy="441" r="1.1"/><circle cx="1260.2" cy="431.2" r="1.1"/><circle cx="1279.8" cy="431.2" r="1.1"/>
  <circle cx="1294.4" cy="421.4" r="1.1"/><circle cx="1294.4" cy="441" r="1.1"/><circle cx="1284.6" cy="431.2" r="1.1"/><circle cx="1304.2" cy="431.2" r="1.1"/>
  <circle cx="1135" cy="462.5" r="1.2"/><circle cx="1168.4" cy="462.5" r="1.2"/><circle cx="1135" cy="481" r="1.2"/><circle cx="1168.4" cy="481" r="1.2"/>
  <circle cx="1177.7" cy="462.5" r="1.2"/><circle cx="1211" cy="462.5" r="1.2"/><circle cx="1177.7" cy="481" r="1.2"/><circle cx="1211" cy="481" r="1.2"/>
  <circle cx="1223.3" cy="463.3" r="1.2"/><circle cx="1256.5" cy="463.3" r="1.2"/><circle cx="1223.3" cy="481.6" r="1.2"/><circle cx="1256.5" cy="481.6" r="1.2"/>
  <circle cx="1265.8" cy="463.3" r="1.2"/><circle cx="1299" cy="463.3" r="1.2"/><circle cx="1265.8" cy="481.6" r="1.2"/><circle cx="1299" cy="481.6" r="1.2"/>
  <circle cx="1132" cy="487" r="1.2"/><circle cx="1170.5" cy="487" r="1.2"/><circle cx="1132" cy="505.5" r="1.2"/><circle cx="1170.5" cy="505.5" r="1.2"/>
  <circle cx="1135" cy="484.5" r="1.2"/><circle cx="1167.5" cy="484.5" r="1.2"/><circle cx="1135" cy="508" r="1.2"/><circle cx="1167.5" cy="508" r="1.2"/>
  <circle cx="1175.5" cy="487" r="1.2"/><circle cx="1214" cy="487" r="1.2"/><circle cx="1175.5" cy="505.5" r="1.2"/><circle cx="1214" cy="505.5" r="1.2"/>
  <circle cx="1178.5" cy="484.5" r="1.2"/><circle cx="1211" cy="484.5" r="1.2"/><circle cx="1178.5" cy="508" r="1.2"/><circle cx="1211" cy="508" r="1.2"/>
  <circle cx="1220" cy="487.5" r="1.2"/><circle cx="1258.5" cy="487.5" r="1.2"/><circle cx="1220" cy="506" r="1.2"/><circle cx="1258.5" cy="506" r="1.2"/>
  <circle cx="1223" cy="485" r="1.2"/><circle cx="1255.5" cy="485" r="1.2"/><circle cx="1223" cy="508.5" r="1.2"/><circle cx="1255.5" cy="508.5" r="1.2"/>
  <circle cx="1263.5" cy="487.5" r="1.2"/><circle cx="1302" cy="487.5" r="1.2"/><circle cx="1263.5" cy="506" r="1.2"/><circle cx="1302" cy="506" r="1.2"/>
  <circle cx="1266.5" cy="485" r="1.2"/><circle cx="1299" cy="485" r="1.2"/><circle cx="1266.5" cy="508.5" r="1.2"/><circle cx="1299" cy="508.5" r="1.2"/>
 </g>
</svg>
<div class="a" style="left:1456px;top:57px;width:5px;height:880px;background:#2a2a2c"></div>
<div class="a" style="left:1098px;top:934px;width:363px;height:3px;background:#2a2a2c"></div>

<!-- RIGHT PANEL -->
<div class="panel" style="left:1461px;top:57px;width:337px;height:401px"></div>
<div class="a" style="left:1471px;top:67px;width:68px;height:25px;background:#353538;border:1px solid #5a5a5d;border-radius:2px;font-size:10.5px;color:#d4d4d4;text-align:center;line-height:24px">Add</div>
<div class="a" style="left:1548px;top:67px;width:68px;height:25px;background:#353538;border:1px solid #505053;border-radius:2px;font-size:10.5px;color:#4e4e50;text-align:center;line-height:24px">Copy</div>
<div class="a" style="left:1625px;top:67px;width:69px;height:25px;background:#353538;border:1px solid #505053;border-radius:2px;font-size:10.5px;color:#4e4e50;text-align:center;line-height:24px">Assign</div>
<div class="a" style="left:1703px;top:67px;width:87px;height:25px;background:#353538;border:1px solid #5a5a5d;border-radius:2px;font-size:10.5px;color:#d4d4d4;text-align:center;line-height:24px;letter-spacing:-0.15px">Delete Unused</div>
<div class="list" style="left:1471px;top:102px;width:319px;height:343px"></div>
<svg class="a" style="left:1494px;top:130px" width="14" height="12"><path d="M1.5,6 l3.5,3.5 l7,-7.5" stroke="#f5c000" stroke-width="2" fill="none"/></svg>
<div class="a" style="left:1522px;top:120px;width:34px;height:33px;background:#fff"></div>
<span class="a" style="left:1565px;top:131px;font-size:10.3px;color:#cfcfcf;line-height:12px">Default_Fabric</span>
<div class="a" style="left:1479px;top:162px;width:302px;height:1px;background:#39393b"></div>
<div class="hdr" style="left:1461px;top:458px;width:337px;height:21px"><span class="htitle" style="left:123px;top:6px">Property Editor</span><div class="dd" style="left:219px;top:5px"></div>
<svg class="a" style="left:0;top:0" width="339" height="21" viewBox="0 0 339 21">
  <path d="M2,9 h3.5 v-3 l4.5,4.5 l-4.5,4.5 v-3 h-3.5z" fill="#b0b0b0"/>
  <rect x="12.5" y="3.5" width="1.3" height="14" fill="#1c1c1e"/>
  <rect x="308" y="4" width="13" height="14" fill="#262628" rx="1"/>
  <path d="M311,10 v6 h7 v-3 M313.5,13.5 l4.5,-4.5 M315.5,9 h2.5 v2.5" stroke="#8c8c8c" stroke-width="1.2" fill="none"/>
  <rect x="323" y="4" width="13" height="14" fill="#262628" rx="1"/>
  <path d="M326.5,7.5 l6,6 M332.5,7.5 l-6,6" stroke="#8e8e8e" stroke-width="1.3"/>
</svg></div>
<div class="panel" style="left:1461px;top:479px;width:337px;height:458px"></div>
<div class="a" style="left:1798px;top:37px;width:2px;height:900px;background:#2a2a2c"></div>

<!-- STATUS BAR -->
<div class="a" style="left:283px;top:935px;width:1178px;height:2px;background:#2a2a2c"></div><div class="a" style="left:28px;top:937px;width:1772px;height:28px;background:#3d3d40;border-top:1px solid #5a5a5d"></div>
<span class="a" style="left:40px;top:947px;font-size:10.3px;color:#bcbcbc;line-height:12px">Version:</span>
<span class="a" style="left:89px;top:947px;font-size:10.5px;color:#bcbcbc;line-height:12px">6.1.601 (r37223)</span>
<span class="a" style="left:175px;top:947px;font-size:10px;letter-spacing:-0.08px;color:#bcbcbc;line-height:12px;white-space:nowrap">MK Bolzan Letti FLORENCE CHIC MD_6_ТОЛЬКО ПОДУШКИ_2</span>
<svg class="a" style="left:1056px;top:945px" width="14" height="12"><path d="M1.5,9.5 L7,2 L12.5,9.5z" fill="#a8a8a8"/><path d="M1.5,10.5 h11" stroke="#777" stroke-width="1"/></svg>
<svg class="a" style="left:1660px;top:941px" width="134" height="22" viewBox="1660 941 134 22">
 <g fill="none" stroke="#8a8a8c" stroke-width="1.3">
  <rect x="1663.8" y="944.5" width="16" height="15" rx="1.5"/>
  <rect x="1691.3" y="944.5" width="6.5" height="15" rx="1.2"/><rect x="1700" y="944.5" width="7" height="15" rx="1.2"/>
  <rect x="1718.8" y="944.5" width="6.5" height="15" rx="1.2"/><rect x="1727.5" y="944.5" width="7" height="6.5" rx="1.2"/><rect x="1727.5" y="953" width="7" height="6.5" rx="1.2"/>
  <rect x="1745.5" y="944.5" width="7" height="6.5" rx="1.2"/><rect x="1754.5" y="944.5" width="7" height="6.5" rx="1.2"/><rect x="1745.5" y="953" width="7" height="6.5" rx="1.2"/><rect x="1754.5" y="953" width="7" height="6.5" rx="1.2"/>
  <rect x="1773.8" y="944.5" width="16" height="15" rx="1.5"/>
  <path d="M1784.5,950 a3.5,3.5 0 1 0 1,3"/>
 </g>
 <path d="M1664,945.5 h15" stroke="#a0a0a0" stroke-width="1.2"/>
 <path d="M1774,945.5 h15" stroke="#a0a0a0" stroke-width="1.2"/>
</svg>
</body></html>
